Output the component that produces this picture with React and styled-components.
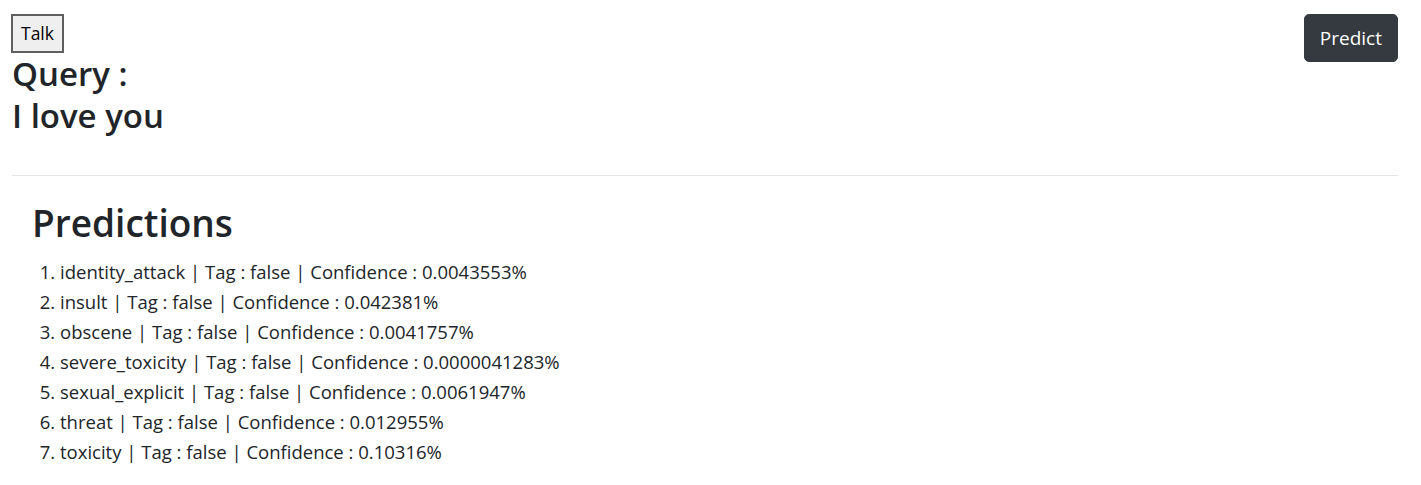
import React from "react";
import styled, { createGlobalStyle } from "styled-components";

const GlobalStyle = createGlobalStyle`
  html, body {
    margin: 0;
    padding: 0;
    background: #fff;
  }
  body {
    font-family: "Open Sans", "Noto Sans", sans-serif;
    color: #212529;
  }
`;

const predictions = [
  { label: "identity_attack", match: false, confidence: "0.0043553" },
  { label: "insult", match: false, confidence: "0.042381" },
  { label: "obscene", match: false, confidence: "0.0041757" },
  { label: "severe_toxicity", match: false, confidence: "0.0000041283" },
  { label: "sexual_explicit", match: false, confidence: "0.0061947" },
  { label: "threat", match: false, confidence: "0.012955" },
  { label: "toxicity", match: false, confidence: "0.10316" },
];

const Page = styled.div`
  padding: 14px 23px 0 12px;
`;

const Header = styled.div`
  display: flex;
  justify-content: space-between;
  align-items: flex-start;
`;

const QueryBlock = styled.div`
  display: flex;
  flex-direction: column;
  align-items: flex-start;
`;

const TalkButton = styled.button`
  margin-left: -1px;
  font-family: inherit;
  font-size: 17.5px;
  line-height: 27px;
  padding: 4px 8px;
  color: #000;
  background: #efefef;
  border: 2px solid #5f5f5f;
  border-radius: 0;
`;

const QueryText = styled.h2`
  margin: 0;
  font-size: 33px;
  font-weight: 600;
  line-height: 42px;
`;

const PredictButton = styled.button`
  font-family: inherit;
  font-size: 19px;
  line-height: 30px;
  padding: 8px 15px;
  color: #fff;
  background: #343a40;
  border: 1px solid #343a40;
  border-radius: 5px;
`;

const Divider = styled.hr`
  margin: 38px 0 0;
  border: 0;
  border-top: 1px solid rgba(0, 0, 0, 0.1);
`;

const Results = styled.section`
  padding: 25px 20px 0;
`;

const ResultsTitle = styled.h1`
  margin: 0 0 12px;
  font-size: 37px;
  font-weight: 600;
  line-height: 1.2;
`;

const ResultList = styled.ol`
  margin: 0;
  padding-left: 28px;
`;

const ResultItem = styled.li`
  font-size: 18.5px;
  line-height: 30px;
`;

export default function App() {
  return (
    <>
      <GlobalStyle />
      <Page>
        <Header>
          <QueryBlock>
            <TalkButton>Talk</TalkButton>
            <QueryText>Query :</QueryText>
            <QueryText>I love you</QueryText>
          </QueryBlock>
          <PredictButton>Predict</PredictButton>
        </Header>
        <Divider />
        <Results>
          <ResultsTitle>Predictions</ResultsTitle>
          <ResultList>
            {predictions.map((p) => (
              <ResultItem key={p.label}>
                {p.label} | Tag : {String(p.match)} | Confidence : {p.confidence}%
              </ResultItem>
            ))}
          </ResultList>
        </Results>
      </Page>
    </>
  );
}
